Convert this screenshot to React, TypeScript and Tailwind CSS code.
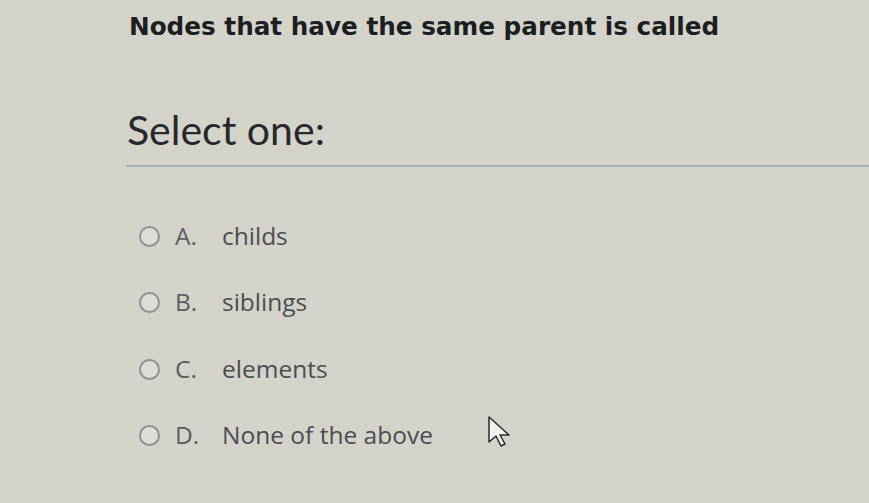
import React from 'react';

const options = [
  { letter: 'A.', text: 'childs' },
  { letter: 'B.', text: 'siblings' },
  { letter: 'C.', text: 'elements' },
  { letter: 'D.', text: 'None of the above' },
];

export default function App() {
  return (
    <div className="relative w-[869px] h-[503px] overflow-hidden bg-[#d4d3ca]">
      <div className="pl-[129px] pt-[12px]">
        <h2 className="text-[24.7px] leading-[30px] font-bold text-[#1c1f22] font-['DejaVu_Sans',sans-serif]">
          Nodes that have the same parent is called
        </h2>
      </div>

      <div className="mt-[64px] pl-[127px]">
        <div className="text-[41px] leading-[48px] text-[#26282b] font-['Lato',sans-serif]">Select one:</div>
      </div>
      <div className="ml-[126px] mt-[11px] h-[2px] bg-[#a9adb4]" />

      <div className="mt-[57px] pl-[139px] flex flex-col gap-[42.5px]">
        {options.map((o) => (
          <label key={o.letter} className="flex items-center h-[24px] font-['Open_Sans',sans-serif] text-[24.5px] text-[#4a4d52]">
            <span className="w-[21px] h-[21px] rounded-full border-2 border-[#8e9094] bg-[#dedcd6]" />
            <span className="ml-[15px] w-[47px] text-[#5a5d62]">{o.letter}</span>
            <span>{o.text}</span>
          </label>
        ))}
      </div>

      <svg className="absolute left-[488px] top-[416px]" width="26" height="36" viewBox="0 0 26 36">
        <path d="M1 1 L1 26 L8 20 L13 30 L17 28 L12 19 L21 19 Z" fill="#f2f2f0" stroke="#2a2b2d" strokeWidth="1.5" strokeLinejoin="round" />
      </svg>
    </div>
  );
}
